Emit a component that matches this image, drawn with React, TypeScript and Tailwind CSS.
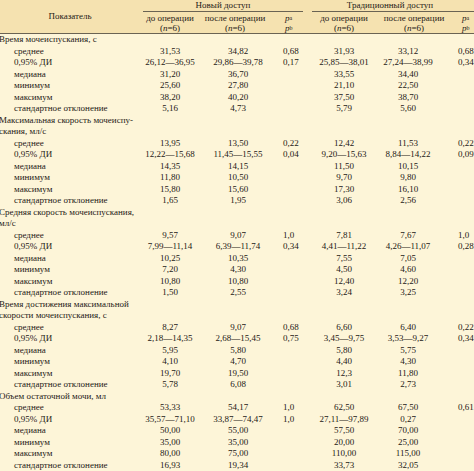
import React from "react";

type Row = { label: string; v: string[] };
type Group = { title: string[]; rows: Row[] };

const SUB = [
  "среднее",
  "0,95% ДИ",
  "медиана",
  "минимум",
  "максимум",
  "стандартное отклонение",
];

function mk(vals: string[][]): Row[] {
  return vals.map((v, i) => ({ label: SUB[i], v }));
}

const groups: Group[] = [
  {
    title: ["Время мочеиспускания, с"],
    rows: mk([
      ["31,53", "34,82", "0,68", "31,93", "33,12", "0,68"],
      ["26,12—36,95", "29,86—39,78", "0,17", "25,85—38,01", "27,24—38,99", "0,34"],
      ["31,20", "36,70", "", "33,55", "34,40", ""],
      ["25,60", "27,80", "", "21,10", "22,50", ""],
      ["38,20", "40,20", "", "37,50", "38,70", ""],
      ["5,16", "4,73", "", "5,79", "5,60", ""],
    ]),
  },
  {
    title: ["Максимальная скорость мочеиспу-", "скания, мл/с"],
    rows: mk([
      ["13,95", "13,50", "0,22", "12,42", "11,53", "0,22"],
      ["12,22—15,68", "11,45—15,55", "0,04", "9,20—15,63", "8,84—14,22", "0,09"],
      ["14,35", "14,15", "", "11,50", "10,15", ""],
      ["11,80", "10,50", "", "9,70", "9,80", ""],
      ["15,80", "15,60", "", "17,30", "16,10", ""],
      ["1,65", "1,95", "", "3,06", "2,56", ""],
    ]),
  },
  {
    title: ["Средняя скорость мочеиспускания,", "мл/с"],
    rows: mk([
      ["9,57", "9,07", "1,0", "7,81", "7,67", "1,0"],
      ["7,99—11,14", "6,39—11,74", "0,34", "4,41—11,22", "4,26—11,07", "0,28"],
      ["10,25", "10,35", "", "7,55", "7,05", ""],
      ["7,20", "4,30", "", "4,50", "4,60", ""],
      ["10,80", "10,80", "", "12,40", "12,20", ""],
      ["1,50", "2,55", "", "3,24", "3,25", ""],
    ]),
  },
  {
    title: ["Время достижения максимальной", "скорости мочеиспускания, с"],
    rows: mk([
      ["8,27", "9,07", "0,68", "6,60", "6,40", "0,22"],
      ["2,18—14,35", "2,68—15,45", "0,75", "3,45—9,75", "3,53—9,27", "0,34"],
      ["5,95", "5,80", "", "5,80", "5,75", ""],
      ["4,10", "4,70", "", "4,40", "4,30", ""],
      ["19,70", "19,50", "", "12,3", "11,80", ""],
      ["5,78", "6,08", "", "3,01", "2,73", ""],
    ]),
  },
  {
    title: ["Объем остаточной мочи, мл"],
    rows: mk([
      ["53,33", "54,17", "1,0", "62,50", "67,50", "0,61"],
      ["35,57—71,10", "33,87—74,47", "1,0", "27,11—97,89", "0,27", ""],
      ["50,00", "55,00", "", "57,50", "70,00", ""],
      ["35,00", "35,00", "", "20,00", "25,00", ""],
      ["80,00", "75,00", "", "110,00", "115,00", ""],
      ["16,93", "19,34", "", "33,73", "32,05", ""],
    ]),
  },
];

const GRID = "grid grid-cols-[140px_60px_76px_34px_68px_60px_40px]";
const C = "min-w-0 flex justify-center whitespace-nowrap";

function ValueRow({ label, v }: Row) {
  return (
    <div className={`${GRID} h-[11.5px] leading-[11.5px]`}>
      <div className="min-w-0 pl-[14px] whitespace-nowrap">{label}</div>
      <div className={C}>{v[0]}</div>
      <div className={C}>{v[1]}</div>
      <div className="min-w-0 pl-[7px] whitespace-nowrap">{v[2]}</div>
      <div className={C}>{v[3]}</div>
      <div className={C}>{v[4]}</div>
      <div className="min-w-0 pl-[20px] whitespace-nowrap">{v[5]}</div>
    </div>
  );
}

function TitleRow({ text }: { text: string }) {
  return (
    <div className={`${GRID} h-[11.5px] leading-[11.5px]`}>
      <div className="col-span-3 min-w-0 -ml-[1px] whitespace-nowrap">{text}</div>
    </div>
  );
}

function HeadCell({ text, extra }: { text: string; extra?: string }) {
  return (
    <div
      className={`min-w-0 flex flex-col items-center justify-center leading-[10px] whitespace-nowrap ${extra ?? ""}`}
    >
      <span>{text}</span>
      <span>
        (<i>n</i>=6)
      </span>
    </div>
  );
}

function PHead({ pl }: { pl: string }) {
  return (
    <div className={`min-w-0 flex flex-col justify-center leading-[10px] whitespace-nowrap ${pl}`}>
      <span>
        <i>p</i>
        <sup className="text-[6px] relative -top-[1px]">a</sup>
      </span>
      <span>
        <i>p</i>
        <sup className="text-[6px] relative -top-[1px]">b</sup>
      </span>
    </div>
  );
}

export default function App() {
  return (
    <div
      className="w-[474px] h-[471px] overflow-hidden bg-[#fdf5d8] text-[#1d1916] text-[9px]"
      style={{ fontFamily: '"Liberation Serif", "Times New Roman", serif' }}
    >
      <div className="w-[478px]">
        <div
          className={`${GRID} grid-rows-[12px_21px] bg-[#f5e2b0] border-b border-[#6a6353]`}
        >
          <div className="row-span-2 flex items-center justify-center">Показатель</div>
          <div className="col-span-3 ml-[3px] mr-[7px] border-b border-[#6a6353] text-center leading-[11px]">
            Новый доступ
          </div>
          <div className="col-span-3 ml-[2px] border-b border-[#6a6353] text-center leading-[11px] pr-[10px]">
            Традиционный доступ
          </div>
          <HeadCell text="до операции" />
          <HeadCell text="после операции" extra="pr-[6px]" />
          <PHead pl="pl-[9px]" />
          <HeadCell text="до операции" />
          <HeadCell text="после операции" extra="pl-[12px]" />
          <PHead pl="pl-[24px]" />
        </div>
        <div>
          {groups.map((g, gi) => (
            <React.Fragment key={gi}>
              {g.title.map((t, ti) => (
                <TitleRow key={ti} text={t} />
              ))}
              {g.rows.map((r, ri) => (
                <ValueRow key={ri} {...r} />
              ))}
            </React.Fragment>
          ))}
        </div>
      </div>
    </div>
  );
}
